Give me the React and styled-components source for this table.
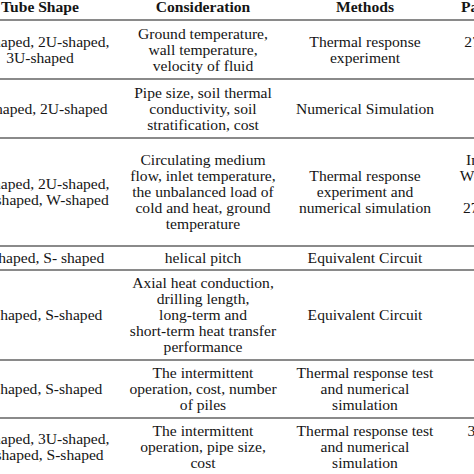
import styled, { createGlobalStyle } from "styled-components";

const GlobalStyle = createGlobalStyle`
  html, body {
    margin: 0;
    padding: 0;
    background: #ffffff;
  }
`;

const rows = [
  {
    h: 59,
    shape: ["U-shaped, 2U-shaped,", "3U-shaped"],
    consideration: ["Ground temperature,", "wall temperature,", "velocity of fluid"],
    methods: ["Thermal response", "experiment"],
    result: ["27.4% increase in", "heat flux"],
  },
  {
    h: 59,
    shape: ["U-shaped, 2U-shaped"],
    consideration: ["Pipe size, soil thermal", "conductivity, soil", "stratification, cost"],
    methods: ["Numerical Simulation"],
    result: ["-"],
  },
  {
    h: 108,
    shape: ["U-shaped, 2U-shaped,", "3U-shaped, W-shaped"],
    consideration: [
      "Circulating medium",
      "flow, inlet temperature,",
      "the unbalanced load of",
      "cold and heat, ground",
      "temperature",
    ],
    methods: ["Thermal response", "experiment and", "numerical simulation"],
    result: ["Increased by 9%,", "W-shaped piles has", "the best", "27.1% higher heat", "exchange"],
  },
  {
    h: 24,
    shape: ["U-shaped, S- shaped"],
    consideration: ["helical pitch"],
    methods: ["Equivalent Circuit"],
    result: ["-"],
  },
  {
    h: 90,
    shape: ["U-shaped, S-shaped"],
    consideration: [
      "Axial heat conduction,",
      "drilling length,",
      "long-term and",
      "short-term heat transfer",
      "performance",
    ],
    methods: ["Equivalent Circuit"],
    result: ["-"],
  },
  {
    h: 58,
    shape: ["U-shaped, S-shaped"],
    consideration: ["The intermittent", "operation, cost, number", "of piles"],
    methods: ["Thermal response test", "and numerical", "simulation"],
    result: ["-"],
  },
  {
    h: 58,
    shape: ["U-shaped, 3U-shaped,", "W-shaped, S-shaped"],
    consideration: ["The intermittent", "operation, pipe size,", "cost"],
    methods: ["Thermal response test", "and numerical", "simulation"],
    result: ["3U-shaped is the", "best", "option"],
  },
];

const Lines = ({ items }) =>
  items.map((line, i) => (
    <span key={i}>
      {line}
      {i < items.length - 1 && <br />}
    </span>
  ));

export default function App() {
  return (
    <>
      <GlobalStyle />
      <Page>
        <Table>
          <colgroup>
            <Col $w={176} />
            <Col $w={150} />
            <Col $w={174} />
            <Col $w={136} />
          </colgroup>
          <thead>
            <Row $h={26}>
              <Head>Tube Shape</Head>
              <Head>Consideration</Head>
              <Head>Methods</Head>
              <Head>Parameter Values</Head>
            </Row>
          </thead>
          <tbody>
            {rows.map((r, i) => (
              <Row key={i} $h={r.h}>
                <Cell>
                  <Lines items={r.shape} />
                </Cell>
                <Cell>
                  <Lines items={r.consideration} />
                </Cell>
                <Cell>
                  <Lines items={r.methods} />
                </Cell>
                <Cell>
                  <Lines items={r.result} />
                </Cell>
              </Row>
            ))}
          </tbody>
        </Table>
      </Page>
    </>
  );
}

const Page = styled.div`
  width: 474px;
  height: 474px;
  overflow: hidden;
  background: #ffffff;
`;

const Table = styled.table`
  border-collapse: collapse;
  table-layout: fixed;
  width: 636px;
  margin-left: -48px;
  margin-top: -6px;
  font-family: "Liberation Serif", "Times New Roman", serif;
  font-size: 15.6px;
  line-height: 16px;
  color: #151515;
`;

const Col = styled.col`
  width: ${(p) => p.$w}px;
`;

const Row = styled.tr`
  height: ${(p) => p.$h}px;
`;

const Head = styled.th`
  padding: 0;
  font-weight: bold;
  text-align: center;
  vertical-align: middle;
  white-space: nowrap;
  border-bottom: 2px solid #8a8a8a;
`;

const Cell = styled.td`
  padding: 0;
  text-align: center;
  vertical-align: middle;
  white-space: nowrap;
  border-bottom: 2px solid #8a8a8a;
`;
